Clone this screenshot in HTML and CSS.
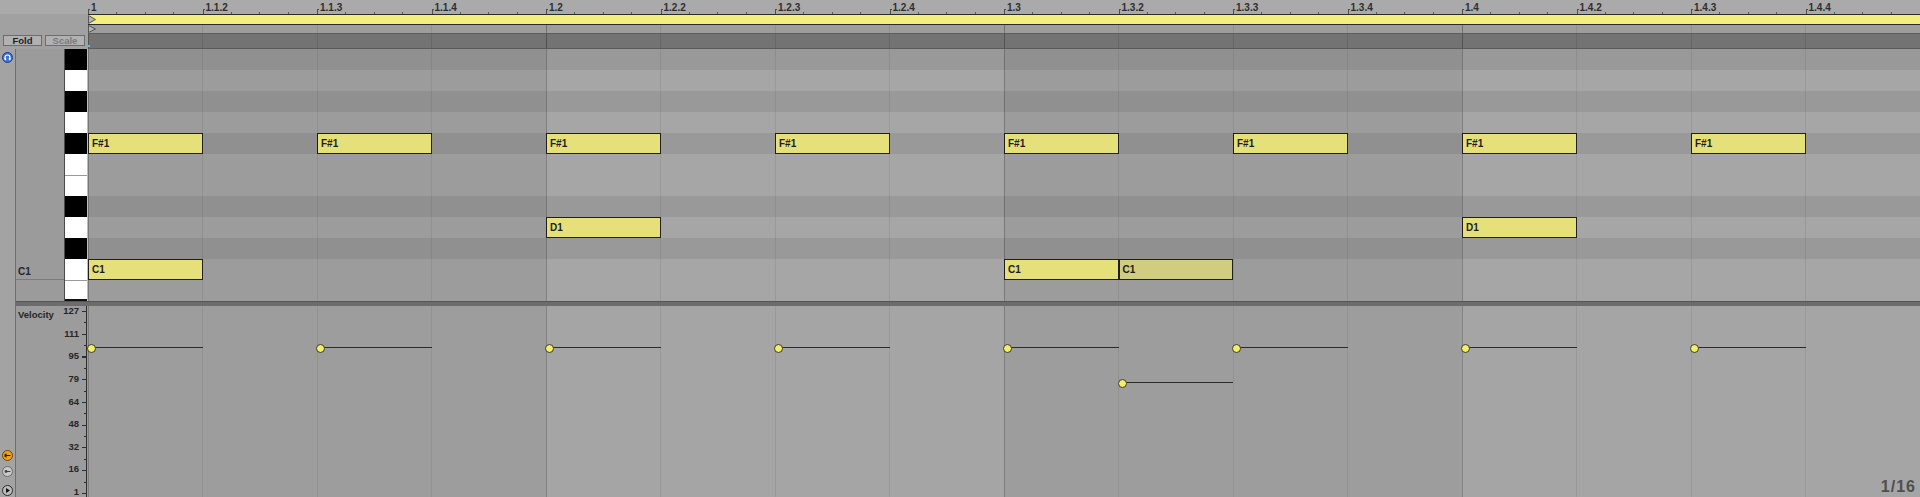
FILE: index.html
```html
<!DOCTYPE html>
<html>
<head>
<meta charset="utf-8">
<link rel="stylesheet" href="styles.css">
</head>
<body>
<div class="app">
  <div class="corner">
    <div class="corner-top"></div>
    <div class="corner-mid"></div>
    <div class="btns">
      <button class="btn btn-fold">Fold</button>
      <button class="btn btn-scale">Scale</button>
    </div>
  </div>

  <div class="header">
    <div class="ruler">
      <div class="rcell">1</div>
      <div class="rcell">1.1.2</div>
      <div class="rcell">1.1.3</div>
      <div class="rcell">1.1.4</div>
      <div class="rcell">1.2</div>
      <div class="rcell">1.2.2</div>
      <div class="rcell">1.2.3</div>
      <div class="rcell">1.2.4</div>
      <div class="rcell">1.3</div>
      <div class="rcell">1.3.2</div>
      <div class="rcell">1.3.3</div>
      <div class="rcell">1.3.4</div>
      <div class="rcell">1.4</div>
      <div class="rcell">1.4.2</div>
      <div class="rcell">1.4.3</div>
      <div class="rcell">1.4.4</div>
    </div>
    <div class="loopbar">
      <svg class="marker" width="9" height="9" viewBox="0 0 9 9"><path d="M0.5 0.5 L7.5 4.5 L0.5 8.5 Z" fill="#b4b4b4" stroke="#555" stroke-width="1"/></svg>
    </div>
    <div class="startbar">
      <svg class="marker" width="9" height="8" viewBox="0 0 9 8"><path d="M0.5 0.5 L7.5 4 L0.5 7.5 Z" fill="#b4b4b4" stroke="#555" stroke-width="1"/></svg>
    </div>
    <div class="darkbar"><span class="cyan"></span></div>
  </div>

  <div class="tools">
    <svg class="ticon" width="11" height="11" viewBox="0 0 11 11">
      <circle cx="5.5" cy="5.5" r="5" fill="#3f74d8" stroke="#1d3e86" stroke-width="1"/>
      <path d="M3 7 V5.5 A2.5 2.5 0 0 1 8 5.5 V7" fill="none" stroke="#fff" stroke-width="1.2"/>
      <rect x="2.5" y="6" width="1.6" height="2.2" fill="#fff"/>
      <rect x="6.9" y="6" width="1.6" height="2.2" fill="#fff"/>
    </svg>
    <div class="tools-bottom">
      <svg class="ticon" width="11" height="11" viewBox="0 0 11 11">
        <circle cx="5.5" cy="5.5" r="5" fill="#f2a11a" stroke="#6a4708" stroke-width="1"/>
        <path d="M2.5 5.5 H8.5 M2.5 5.5 L4.5 3.8 M2.5 5.5 L4.5 7.2" fill="none" stroke="#2a1d05" stroke-width="1.2"/>
      </svg>
      <svg class="ticon" width="11" height="11" viewBox="0 0 11 11">
        <circle cx="5.5" cy="5.5" r="5" fill="#c9c9c9" stroke="#6a6a6a" stroke-width="1"/>
        <circle cx="4" cy="5.5" r="1.4" fill="#444"/>
        <path d="M5 5.5 H8.5" stroke="#444" stroke-width="1"/>
      </svg>
      <svg class="ticon play" width="11" height="11" viewBox="0 0 11 11">
        <circle cx="5.5" cy="5.5" r="5" fill="#bdbdbd" stroke="#2a2a2a" stroke-width="1"/>
        <path d="M4 3 L8 5.5 L4 8 Z" fill="#111"/>
      </svg>
    </div>
  </div>

  <div class="names">
    <div class="cname">C1</div>
  </div>

  <div class="keys">
    <div class="key b"></div>
    <div class="key w"></div>
    <div class="key b"></div>
    <div class="key w"></div>
    <div class="key b"></div>
    <div class="key w"></div>
    <div class="key w split"></div>
    <div class="key b"></div>
    <div class="key w"></div>
    <div class="key b"></div>
    <div class="key w"></div>
    <div class="key w split last"></div>
  </div>

  <div class="roll">
    <div class="bands">
      <div class="band b"></div>
      <div class="band w"></div>
      <div class="band b"></div>
      <div class="band w"></div>
      <div class="band b"></div>
      <div class="band w"></div>
      <div class="band w"></div>
      <div class="band b"></div>
      <div class="band w"></div>
      <div class="band b"></div>
      <div class="band w"></div>
      <div class="band w"></div>
    </div>
    <div class="lines"></div>

    <div class="note" style="grid-row:5;grid-column:1">F#1</div>
    <div class="note" style="grid-row:5;grid-column:3">F#1</div>
    <div class="note" style="grid-row:5;grid-column:5">F#1</div>
    <div class="note" style="grid-row:5;grid-column:7">F#1</div>
    <div class="note" style="grid-row:5;grid-column:9">F#1</div>
    <div class="note" style="grid-row:5;grid-column:11">F#1</div>
    <div class="note" style="grid-row:5;grid-column:13">F#1</div>
    <div class="note" style="grid-row:5;grid-column:15">F#1</div>

    <div class="note" style="grid-row:9;grid-column:5">D1</div>
    <div class="note" style="grid-row:9;grid-column:13">D1</div>

    <div class="note" style="grid-row:11;grid-column:1">C1</div>
    <div class="note" style="grid-row:11;grid-column:9">C1</div>
    <div class="note soft" style="grid-row:11;grid-column:10">C1</div>
  </div>

  <div class="sep"></div>

  <div class="vel-panel">
    <div class="vel-title">Velocity</div>
    <div class="vel-scale">
      <span>127</span><span>111</span><span>95</span><span>79</span><span>64</span><span>48</span><span>32</span><span>16</span><span>1</span>
    </div>
    <div class="vel-axis"><div class="vel-ticks"></div></div>
  </div>

  <div class="vel-lane">
    <div class="vel-area">
      <div class="stem" style="left:0%;bottom:79.7%"></div>
      <div class="stem" style="left:12.5%;bottom:79.7%"></div>
      <div class="stem" style="left:25%;bottom:79.7%"></div>
      <div class="stem" style="left:37.5%;bottom:79.7%"></div>
      <div class="stem" style="left:50%;bottom:79.7%"></div>
      <div class="stem" style="left:56.25%;bottom:60.4%"></div>
      <div class="stem" style="left:62.5%;bottom:79.7%"></div>
      <div class="stem" style="left:75%;bottom:79.7%"></div>
      <div class="stem" style="left:87.5%;bottom:79.7%"></div>
    </div>
    <div class="grid-size">1/16</div>
  </div>
</div>
</body>
</html>
```

FILE: styles.css
```css
* { box-sizing: border-box; margin: 0; padding: 0; }

html, body {
  width: 1920px;
  height: 497px;
  overflow: hidden;
  background: #a0a0a0;
}

body {
  font-family: "Liberation Sans", Arial, sans-serif;
  font-weight: bold;
  font-size: 10px;
  color: #222;
}

.app {
  display: grid;
  grid-template-columns: 16px 48px 24px 1fr;
  grid-template-rows: 49px 252px 5px 191px;
  width: 1920px;
  height: 497px;
}

/* ---------- top-left corner ---------- */
.corner {
  grid-column: 1 / 4;
  grid-row: 1;
  display: flex;
  flex-direction: column;
  background: #a1a1a1;
}
.corner-top {
  height: 14px;
  background: #aaaaaa;
}
.corner-mid { flex: 1; }
.btns {
  display: flex;
  gap: 3px;
  padding: 2px 3px 3px 3px;
}
.btn {
  height: 11px;
  font: bold 9.5px "Liberation Sans", Arial, sans-serif;
  line-height: 9px;
  background: #b1b1b1;
  border: 1px solid #6c6c6c;
  color: #1d1d1d;
}
.btn-fold { width: 39px; }
.btn-scale { width: 40px; color: #7a7a7a; }

/* ---------- header strips ---------- */
.header {
  grid-column: 4;
  grid-row: 1;
  display: flex;
  flex-direction: column;
}
.ruler {
  height: 14px;
  display: flex;
  background: #aaaaaa;
}
.rcell {
  flex: 1;
  padding: 3px 0 0 3px;
  line-height: 10px;
  color: #2e2e2e;
  background:
    linear-gradient(#4e4e4e, #4e4e4e) 0 100% / 1px 5px no-repeat,
    linear-gradient(#4e4e4e, #4e4e4e) 0 9px / 2px 1px no-repeat,
    linear-gradient(#5a5a5a, #5a5a5a) 25% 100% / 1px 2px no-repeat,
    linear-gradient(#5a5a5a, #5a5a5a) 50% 100% / 1px 2px no-repeat,
    linear-gradient(#5a5a5a, #5a5a5a) 75% 100% / 1px 2px no-repeat;
}
.loopbar {
  height: 11px;
  background: #f4ef7c;
  border-top: 1px solid #2b2b2b;
  border-bottom: 1px solid #2b2b2b;
  display: flex;
  align-items: center;
}
.startbar {
  height: 9px;
  background:
    repeating-linear-gradient(to right, rgba(0,0,0,.2) 0 1px, transparent 1px 25%),
    repeating-linear-gradient(to right, rgba(0,0,0,.09) 0 1px, transparent 1px 6.25%),
    #9d9d9d;
  border-bottom: 1px solid #5e5e5e;
  display: flex;
  align-items: flex-start;
}
.marker { display: block; }
.darkbar {
  height: 15px;
  background:
    repeating-linear-gradient(to right, rgba(0,0,0,.2) 0 1px, transparent 1px 25%),
    repeating-linear-gradient(to right, rgba(0,0,0,.1) 0 1px, transparent 1px 6.25%),
    #737373;
  border-bottom: 1px solid #5a5a5a;
  display: flex;
  align-items: flex-end;
}
.cyan {
  width: 2px;
  height: 2px;
  margin-bottom: 1px;
  background: #2fd3ee;
}

/* ---------- left tool column ---------- */
.tools {
  grid-column: 1;
  grid-row: 2 / 5;
  background: #a3a3a3;
  border-right: 1px solid #6f6f6f;
  display: flex;
  flex-direction: column;
  justify-content: space-between;
  align-items: center;
  padding: 3px 1px 1px 0;
}
.tools-bottom {
  display: flex;
  flex-direction: column;
  gap: 5px;
}
.ticon { display: block; }
.ticon.play { margin-top: 3px; }

/* ---------- note names + keys ---------- */
.names {
  grid-column: 2;
  grid-row: 2;
  display: grid;
  grid-template-rows: repeat(12, 21px);
  background: #9b9b9b;
}
.cname {
  grid-row: 11;
  border-bottom: 1px solid #7b7b7b;
  display: flex;
  align-items: flex-end;
  padding: 0 0 2px 2px;
  color: #262626;
}

.keys {
  grid-column: 3;
  grid-row: 2;
  display: flex;
  flex-direction: column;
  border-left: 1px solid #4a4a4a;
  border-right: 1px solid #bdbdbd;
  background: #fff;
}
.key { height: 21px; }
.key.w { background: #ffffff; }
.key.b { background: #000000; }
.key.split { border-top: 1px solid #9a9a9a; }
.key.last { border-bottom: 2px solid #111; }

/* ---------- piano roll ---------- */
.roll {
  grid-column: 4;
  grid-row: 2;
  display: grid;
  grid-template-columns: repeat(16, 1fr);
  grid-template-rows: repeat(12, 21px);
}
.bands {
  grid-column: 1 / -1;
  grid-row: 1 / -1;
  display: flex;
  flex-direction: column;
}
.band { height: 21px; }
.band.w { background: #a6a6a6; }
.band.b { background: #999999; }
.lines {
  grid-column: 1 / -1;
  grid-row: 1 / -1;
  background:
    repeating-linear-gradient(to right, rgba(0,0,0,.16) 0 1px, transparent 1px 25%),
    repeating-linear-gradient(to right, rgba(0,0,0,.08) 0 1px, transparent 1px 6.25%),
    linear-gradient(to right,
      rgba(0,0,0,.06) 0 25%, transparent 25% 50%,
      rgba(0,0,0,.06) 50% 75%, transparent 75% 100%);
}
.note {
  background: #e6e07b;
  border: 1px solid #1f1f1f;
  padding-left: 3px;
  line-height: 19px;
  color: #1d1d1d;
  white-space: nowrap;
  overflow: hidden;
}
.note.soft { background: #d0cc80; }

/* ---------- separator ---------- */
.sep {
  grid-column: 2 / 5;
  grid-row: 3;
  background: #6c6c6c;
  border-top: 1px solid #545454;
}

/* ---------- velocity ---------- */
.vel-panel {
  grid-column: 2 / 4;
  grid-row: 4;
  display: flex;
  background: #9c9c9c;
}
.vel-title {
  flex: 1;
  padding: 3px 0 0 2px;
  font-size: 9.5px;
  color: #262626;
}
.vel-scale {
  display: flex;
  flex-direction: column;
  justify-content: space-between;
  align-items: flex-end;
  color: #262626;
  font-size: 9.5px;
}
.vel-scale span {
  display: block;
  height: 10px;
  line-height: 10px;
}
.vel-axis {
  width: 8px;
  margin-right: 1px;
  border-right: 1px solid #2e2e2e;
  padding-top: 5px;
}
.vel-ticks {
  height: 183px;
  border-bottom: 1px solid #2e2e2e;
  margin-left: 3px;
  background:
    repeating-linear-gradient(to bottom, #2e2e2e 0 1px, transparent 1px 12.5%) right top / 4px 182px no-repeat,
    repeating-linear-gradient(to bottom, #2e2e2e 0 1px, transparent 1px 6.25%) right top / 2px 182px no-repeat;
}

.vel-lane {
  grid-column: 4;
  grid-row: 4;
  position: relative;
  padding-top: 5px;
  background:
    repeating-linear-gradient(to right, rgba(0,0,0,.14) 0 1px, transparent 1px 25%),
    repeating-linear-gradient(to right, rgba(0,0,0,.07) 0 1px, transparent 1px 6.25%),
    linear-gradient(to right,
      rgba(0,0,0,.05) 0 25%, transparent 25% 50%,
      rgba(0,0,0,.05) 50% 75%, transparent 75% 100%),
    #a5a5a5;
}
.vel-area {
  position: relative;
  height: 182px;
}
.stem {
  position: absolute;
  width: 6.25%;
  height: 1px;
  background: #2b2b2b;
}
.stem::before {
  content: "";
  position: absolute;
  left: -1px;
  top: -3px;
  width: 7px;
  height: 7px;
  border-radius: 50%;
  background: #f3ef6a;
  border: 1px solid #3a3a2a;
}
.grid-size {
  position: absolute;
  right: 4px;
  bottom: 2px;
  font-size: 16px;
  line-height: 16px;
  letter-spacing: 1px;
  color: #4f4f4f;
}
```
